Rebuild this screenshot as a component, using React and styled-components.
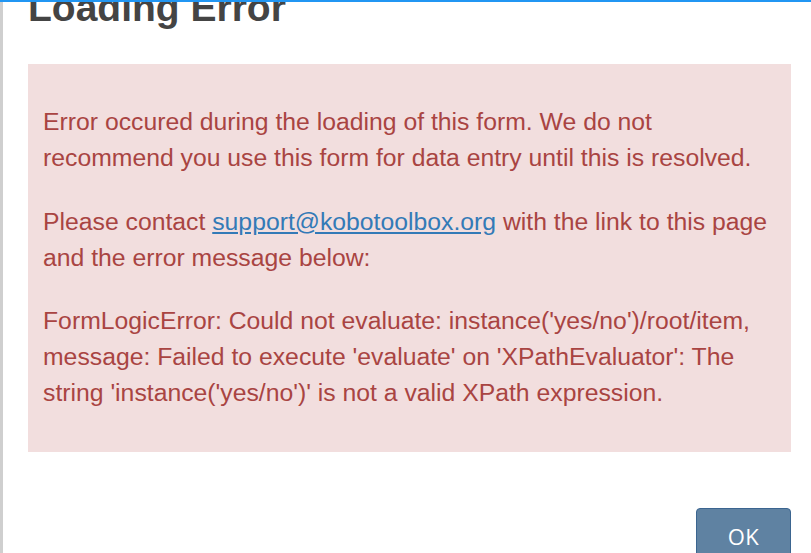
import React from "react";
import styled, { createGlobalStyle } from "styled-components";

const Global = createGlobalStyle`
  html, body { margin: 0; padding: 0; background: #fff; overflow: hidden; }
  body { font-family: "Liberation Sans", Arial, sans-serif; }
`;

const Frame = styled.div`
  box-sizing: border-box;
  width: 811px;
  height: 553px;
  border-top: 2px solid #2196f3;
  display: flex;
  overflow: hidden;
`;

const Rail = styled.div`
  width: 3px;
  flex: none;
  background: #cfcfcf;
`;

const Dialog = styled.div`
  flex: 1;
  display: flex;
  flex-direction: column;
  padding: 0 20px 0 25px;
`;

const Title = styled.h1`
  margin: -14px 0 0;
  font-family: "Liberation Sans", Arial, sans-serif;
  font-weight: bold;
  font-size: 39px;
  line-height: 40px;
  color: #444;
`;

const Alert = styled.div`
  margin-top: 36px;
  background: #f2dede;
  color: #a94442;
  padding: 40px 15px 41px 15px;
  font-size: 24.75px;
  line-height: 36px;
`;

const Para = styled.p`
  margin: 0;
  & + & { margin-top: 27.5px; }
`;

const Link = styled.a`
  color: #337ab7;
  text-decoration: underline;
`;

const Footer = styled.div`
  display: flex;
  justify-content: flex-end;
  margin-top: 56px;
`;

const Button = styled.button`
  width: 95px;
  height: 60px;
  box-sizing: border-box;
  background: #5f82a2;
  border: 1px solid #3b6590;
  border-radius: 4px;
  color: #fff;
  font-family: "Open Sans", sans-serif;
  font-size: 22px;
  letter-spacing: 0.5px;
  padding: 7px 0 0;
  display: flex;
  justify-content: center;
  align-items: flex-start;
  line-height: 40px;
`;

export default function App() {
  return (
    <>
      <Global />
      <Frame>
        <Rail />
        <Dialog>
          <Title>Loading Error</Title>
          <Alert>
            <Para>
              Error occured during the loading of this form. We do not recommend you use this form for data entry until this is resolved.
            </Para>
            <Para>
              Please contact <Link href="#">support@kobotoolbox.org</Link> with the link to this page and the error message below:
            </Para>
            <Para>
              FormLogicError: Could not evaluate: instance('yes/no')/root/item, message: Failed to execute 'evaluate' on 'XPathEvaluator': The string 'instance('yes/no')' is not a valid XPath expression.
            </Para>
          </Alert>
          <Footer>
            <Button>OK</Button>
          </Footer>
        </Dialog>
      </Frame>
    </>
  );
}
